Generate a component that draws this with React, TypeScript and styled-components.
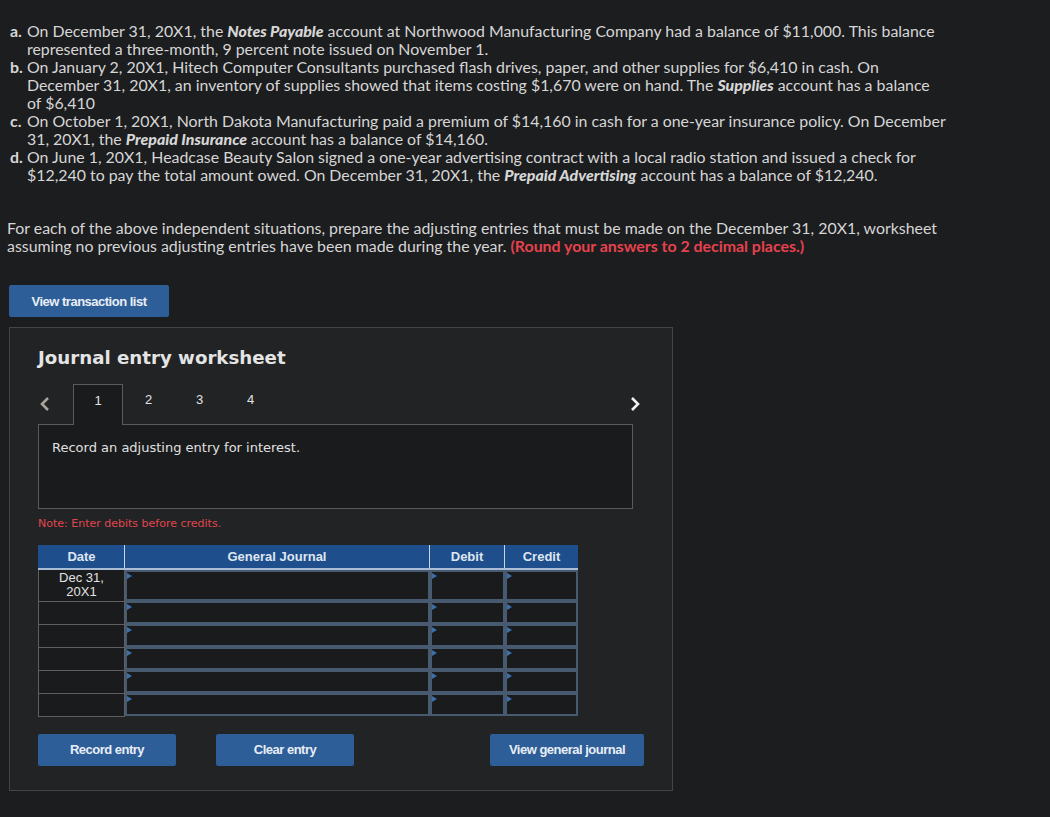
import * as React from 'react'
import styled, { createGlobalStyle } from 'styled-components';

const GlobalStyle = createGlobalStyle`
  html, body {
    margin: 0;
    padding: 0;
    background: #1c1d1f;
  }
  body {
    color: #d6d6d6;
    font-family: Lato, "Open Sans", sans-serif;
  }
`

const Page = styled.div`
  padding: 22px 8px 26px 7px;
  width: 1050px;
  box-sizing: border-box;
`

const Situations = styled.ol`
  list-style: none;
  margin: 0;
  padding: 0 0 0 3px;
  font-size: 15.9px;
  line-height: 18px;
`

const Item = styled.li`
  display: flex;
  white-space: nowrap;
`

const Marker = styled.b`
  width: 17px;
  flex: none;
  font-weight: 700;
`

const Acct = styled.b`
  font-style: italic;
  font-weight: 900;
`

const Instructions = styled.p`
  margin: 35px 0 0;
  font-size: 15.9px;
  line-height: 18px;
  white-space: nowrap;
`

const Round = styled.span`
  color: #e5424d;
  font-weight: 700;
`

const BlueButton = styled.button<{ $w: number }>`
  width: ${p => p.$w}px;
  height: 32px;
  border: none;
  border-radius: 2px;
  background: #2e5e98;
  color: #e8eef6;
  font-family: "Liberation Sans", Arial, sans-serif;
  font-weight: 700;
  font-size: 13px;
  letter-spacing: -0.5px;
  padding: 0;
  cursor: pointer;
`

const TopButton = styled(BlueButton)`
  margin: 30px 0 0 2px;
  display: block;
`

const Panel = styled.section`
  margin: 10px 0 0 2px;
  width: 664px;
  box-sizing: border-box;
  border: 1px solid #444547;
  background: #222325;
  padding: 18px 0 24px 28px;
`

const Title = styled.h2`
  margin: 0;
  font-family: "DejaVu Sans", Verdana, sans-serif;
  font-size: 18.2px;
  line-height: 24px;
  font-weight: 700;
  color: #e4e4e4;
`

const TabRow = styled.div`
  display: flex;
  align-items: stretch;
  height: 40px;
  margin-top: 14px;
  width: 614px;
  position: relative;
  z-index: 1;
`

const Chevron = styled.button<{ $dim?: boolean }>`
  width: 35px;
  flex: none;
  border: none;
  background: transparent;
  color: ${p => (p.$dim ? '#a8a49a' : '#f2f2f2')};
  display: flex;
  align-items: center;
  justify-content: ${p => (p.$dim ? 'flex-start' : 'center')};
  padding: 0 0 0 ${p => (p.$dim ? '1px' : '0')};
  cursor: pointer;
`

const Tab = styled.div<{ $active?: boolean }>`
  width: ${p => (p.$active ? 50 : 51)}px;
  flex: none;
  box-sizing: border-box;
  display: flex;
  align-items: center;
  justify-content: center;
  padding-bottom: 10px;
  font-family: "Liberation Sans", Arial, sans-serif;
  font-size: 13px;
  color: #e2e2e2;
  border: 1px solid ${p => (p.$active ? '#5b5b5b' : 'transparent')};
  border-bottom: none;
  background: ${p => (p.$active ? '#1a1b1d' : 'transparent')};
  margin-bottom: ${p => (p.$active ? '-1px' : '0')};
`

const Spacer = styled.div`
  flex: 1;
`

const Prompt = styled.div`
  width: 595px;
  height: 85px;
  box-sizing: border-box;
  border: 1px solid #5b5b5b;
  background: #1a1b1d;
  padding: 14px 13px;
  font-family: "DejaVu Sans", Verdana, sans-serif;
  font-size: 13px;
  line-height: 17px;
  color: #e0e0e0;
`

const Note = styled.div`
  margin-top: 8px;
  font-family: "DejaVu Sans", Verdana, sans-serif;
  font-size: 11px;
  line-height: 14px;
  color: #e0464e;
`

const Journal = styled.table`
  margin-top: 14px;
  border-collapse: collapse;
  font-family: "Liberation Sans", Arial, sans-serif;
  font-size: 13px;
`

const Head = styled.th<{ $w: number }>`
  width: ${p => p.$w}px;
  height: 23px;
  padding: 0;
  background: #1e4e8c;
  color: #dfe6ef;
  font-weight: 700;
  border-left: 1px solid #c9d4e2;
  border-bottom: 2px solid #a9bdd6;
  &:first-child {
    border-left: 1px solid #1e4e8c;
  }
`

const DateCell = styled.td`
  padding: 0;
  border: 1px solid #5f5f5f;
  background: #1a1b1d;
  color: #e2e2e2;
  text-align: center;
  vertical-align: top;
  line-height: 14px;
`

const DateText = styled.div`
  padding-top: 1px;
`

const InputCell = styled.td`
  padding: 0;
  border: none;
  vertical-align: top;
`

const Field = styled.div<{ $h: number }>`
  position: relative;
  height: ${p => p.$h}px;
  box-sizing: border-box;
  border: 2px solid #485a6f;
  background: #1a1b1d;
`

const Caret = styled.span`
  position: absolute;
  left: 0;
  top: 1px;
  width: 0;
  height: 0;
  border-top: 3px solid transparent;
  border-bottom: 3px solid transparent;
  border-left: 5px solid #3d6fa9;
`

const Actions = styled.div`
  display: flex;
  margin-top: 17px;
  width: 606px;
`

const Gap = styled.div<{ $w: number }>`
  width: ${p => p.$w}px;
  flex: none;
`

function LeftArrow() {
  return (
    <svg width="12" height="16" viewBox="0 0 12 16">
      <path d="M9 2 L3 8 L9 14" fill="none" stroke="currentColor" strokeWidth="2.6" />
    </svg>
  )
}

function RightArrow() {
  return (
    <svg width="12" height="16" viewBox="0 0 12 16">
      <path d="M3 2 L9 8 L3 14" fill="none" stroke="currentColor" strokeWidth="2.6" />
    </svg>
  )
}

const rows = [31, 23, 23, 23, 23, 23]

export default function App() {
  return (
    <Page>
      <GlobalStyle />
      <Situations>
        <Item>
          <Marker>a.</Marker>
          <span>
            On December 31, 20X1, the <Acct>Notes Payable</Acct> account at Northwood Manufacturing Company had a balance of $11,000. This balance<br />
            represented a three-month, 9 percent note issued on November 1.
          </span>
        </Item>
        <Item>
          <Marker>b.</Marker>
          <span>
            On January 2, 20X1, Hitech Computer Consultants purchased flash drives, paper, and other supplies for $6,410 in cash. On<br />
            December 31, 20X1, an inventory of supplies showed that items costing $1,670 were on hand. The <Acct>Supplies</Acct> account has a balance<br />
            of $6,410
          </span>
        </Item>
        <Item>
          <Marker>c.</Marker>
          <span>
            On October 1, 20X1, North Dakota Manufacturing paid a premium of $14,160 in cash for a one-year insurance policy. On December<br />
            31, 20X1, the <Acct>Prepaid Insurance</Acct> account has a balance of $14,160.
          </span>
        </Item>
        <Item>
          <Marker>d.</Marker>
          <span>
            On June 1, 20X1, Headcase Beauty Salon signed a one-year advertising contract with a local radio station and issued a check for<br />
            $12,240 to pay the total amount owed. On December 31, 20X1, the <Acct>Prepaid Advertising</Acct> account has a balance of $12,240.
          </span>
        </Item>
      </Situations>

      <Instructions>
        For each of the above independent situations, prepare the adjusting entries that must be made on the December 31, 20X1, worksheet<br />
        assuming no previous adjusting entries have been made during the year. <Round>(Round your answers to 2 decimal places.)</Round>
      </Instructions>

      <TopButton $w={160}>View transaction list</TopButton>

      <Panel>
        <Title>Journal entry worksheet</Title>
        <TabRow>
          <Chevron $dim aria-label="previous"><LeftArrow /></Chevron>
          <Tab $active>1</Tab>
          <Tab>2</Tab>
          <Tab>3</Tab>
          <Tab>4</Tab>
          <Spacer />
          <Chevron aria-label="next"><RightArrow /></Chevron>
        </TabRow>
        <Prompt>Record an adjusting entry for interest.</Prompt>
        <Note>Note: Enter debits before credits.</Note>

        <Journal>
          <thead>
            <tr>
              <Head $w={85}>Date</Head>
              <Head $w={304}>General Journal</Head>
              <Head $w={74}>Debit</Head>
              <Head $w={73}>Credit</Head>
            </tr>
          </thead>
          <tbody>
            {rows.map((h, i) => (
              <tr key={i}>
                <DateCell>
                  {i === 0 && <DateText>Dec 31,<br />20X1</DateText>}
                </DateCell>
                <InputCell><Field $h={h}><Caret /></Field></InputCell>
                <InputCell><Field $h={h}><Caret /></Field></InputCell>
                <InputCell><Field $h={h}><Caret /></Field></InputCell>
              </tr>
            ))}
          </tbody>
        </Journal>

        <Actions>
          <BlueButton $w={138}>Record entry</BlueButton>
          <Gap $w={40} />
          <BlueButton $w={138}>Clear entry</BlueButton>
          <Spacer />
          <BlueButton $w={154}>View general journal</BlueButton>
        </Actions>
      </Panel>
    </Page>
  )
}
